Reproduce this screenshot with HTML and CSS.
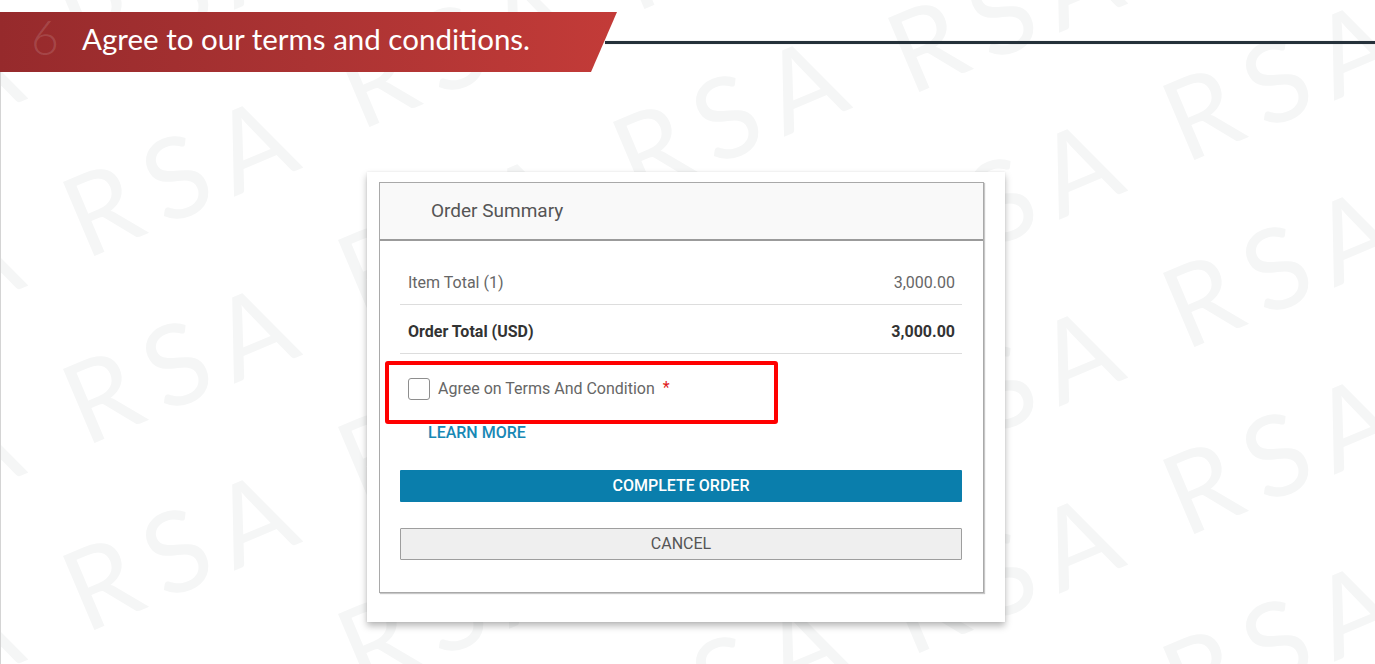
FILE: index.html
```html
<!DOCTYPE html>
<html lang="en">
<head>
<meta charset="utf-8">
<title>Agree to our terms and conditions</title>
<link rel="stylesheet" href="styles.css">
</head>
<body>
<div class="page">
  <div class="wm" aria-hidden="true">
    <div class="wm-col wm-c0"><div class="mark"><span>RSA</span></div><div class="mark"><span>RSA</span></div><div class="mark"><span>RSA</span></div><div class="mark"><span>RSA</span></div><div class="mark"><span>RSA</span></div></div>
    <div class="wm-col wm-c1"><div class="mark"><span>RSA</span></div><div class="mark"><span>RSA</span></div><div class="mark"><span>RSA</span></div><div class="mark"><span>RSA</span></div><div class="mark"><span>RSA</span></div></div>
    <div class="wm-col wm-c2"><div class="mark"><span>RSA</span></div><div class="mark"><span>RSA</span></div><div class="mark"><span>RSA</span></div><div class="mark"><span>RSA</span></div><div class="mark"><span>RSA</span></div></div>
    <div class="wm-col wm-c3"><div class="mark"><span>RSA</span></div><div class="mark"><span>RSA</span></div><div class="mark"><span>RSA</span></div><div class="mark"><span>RSA</span></div><div class="mark"><span>RSA</span></div></div>
    <div class="wm-col wm-c4"><div class="mark"><span>RSA</span></div><div class="mark"><span>RSA</span></div><div class="mark"><span>RSA</span></div><div class="mark"><span>RSA</span></div><div class="mark"><span>RSA</span></div></div>
    <div class="wm-col wm-c5"><div class="mark"><span>RSA</span></div><div class="mark"><span>RSA</span></div><div class="mark"><span>RSA</span></div><div class="mark"><span>RSA</span></div><div class="mark"><span>RSA</span></div></div>
  </div>

  <header class="step">
    <div class="step-banner">
      <span class="step-num">6</span>
      <h1 class="step-title">Agree to our terms and conditions.</h1>
    </div>
    <div class="step-line"></div>
  </header>

  <main class="main">
    <section class="card">
      <div class="summary">
        <div class="summary-head">Order Summary</div>
        <div class="summary-body">
          <div class="row"><span>Item Total (1)</span><span>3,000.00</span></div>
          <div class="row row-total"><span>Order Total (USD)</span><span>3,000.00</span></div>
          <div class="terms">
            <label class="agree">
              <span class="box"></span>
              <span class="agree-text">Agree on Terms And Condition</span>
              <span class="req">*</span>
            </label>
            <a class="learn">LEARN MORE</a>
            <div class="highlight"></div>
          </div>
          <button class="btn btn-primary">COMPLETE ORDER</button>
          <button class="btn btn-cancel">CANCEL</button>
        </div>
      </div>
    </section>
  </main>
</div>
</body>
</html>
```
FILE: styles.css
```css
* { box-sizing: border-box; }

html, body {
  margin: 0;
  padding: 0;
  background: #ffffff;
}

.page {
  position: relative;
  width: 1375px;
  height: 664px;
  overflow: hidden;
  padding-top: 12px;
  font-family: Roboto, "Liberation Sans", Arial, sans-serif;
}

/* watermark layer */
.wm {
  position: absolute;
  top: 0;
  left: -190px;
  right: 0;
  bottom: 0;
  display: flex;
  z-index: 0;
  pointer-events: none;
}
.wm-col {
  flex: none;
  width: 275px;
}
.wm-c0 { margin-top: -95px; }
.wm-c1 { margin-top: -26px; }
.wm-c2 { margin-top: 32px; }
.wm-c3 { margin-top: -86px; }
.wm-c4 { margin-top: -3px; }
.wm-c5 { margin-top: 65px; }

.mark {
  height: 187px;
}
.mark span {
  display: block;
  font-family: Lato, "DejaVu Sans", sans-serif;
  font-weight: 400;
  font-size: 112px;
  line-height: 1;
  letter-spacing: 16px;
  color: #f5f6f6;
  white-space: nowrap;
  transform-origin: 0 99px;
  transform: rotate(-23deg);
}

/* step header */
.step {
  position: relative;
  z-index: 1;
  display: flex;
  height: 60px;
}
.step-banner {
  flex: none;
  width: 617px;
  height: 60px;
  display: flex;
  align-items: center;
  padding-left: 31px;
  padding-bottom: 6px;
  background: linear-gradient(90deg, #962a2c 0%, #ab3333 50%, #c33b38 100%);
  clip-path: polygon(0 0, 100% 0, calc(100% - 26px) 100%, 0 100%);
}
.step-num {
  width: 51px;
  font-family: Lato, "DejaVu Sans", sans-serif;
  font-weight: 300;
  font-size: 48px;
  line-height: 1;
  color: rgba(255, 255, 255, 0.14);
  position: relative;
  top: -2px;
}
.step-title {
  margin: 0;
  font-family: Lato, "DejaVu Sans", sans-serif;
  font-weight: 400;
  font-size: 29.5px;
  line-height: 1;
  color: #ffffff;
  white-space: nowrap;
}
.step-line {
  flex: 1;
  align-self: center;
  height: 3px;
  margin-left: -12px;
  background: #25313a;
  box-shadow: 0 0 1px rgba(0, 0, 0, 0.35);
}

/* main area */
.main {
  position: relative;
  z-index: 1;
  height: 592px;
  border-left: 1px solid #d4d4d4;
  display: flex;
  justify-content: center;
  align-items: flex-start;
  padding-top: 100px;
  padding-right: 4px;
}

.card {
  width: 638px;
  background: #ffffff;
  padding: 10px 21px 29px 12px;
  box-shadow: 0 4px 7px rgba(0, 0, 0, 0.28), 0 0 2px rgba(0, 0, 0, 0.08);
}

.summary {
  border: 1px solid #a9a9a9;
  box-shadow: 1px 1px 1px rgba(0, 0, 0, 0.22);
  background: #ffffff;
}
.summary-head {
  height: 58px;
  padding-left: 51px;
  background: #f9f9f9;
  border-bottom: 2px solid #9b9b9b;
  font-size: 19px;
  line-height: 55px;
  color: #555555;
}
.summary-body {
  padding: 15px 21px 32px 20px;
}

.row {
  display: flex;
  justify-content: space-between;
  padding: 17px 7px 11px 8px;
  line-height: 20px;
  font-size: 16px;
  color: #666666;
  border-bottom: 1px solid #dddddd;
}
.row-total {
  font-weight: 700;
  color: #333333;
}

.terms {
  position: relative;
  padding-top: 24px;
}
.agree {
  display: flex;
  align-items: center;
  height: 22px;
  padding-left: 8px;
  font-size: 16px;
  color: #666666;
}
.box {
  width: 22px;
  height: 22px;
  border: 1px solid #8e8e8e;
  border-radius: 3px;
  background: #ffffff;
}
.agree-text {
  margin-left: 8px;
  line-height: 20px;
}
.req {
  margin-left: 8px;
  color: #e01b1b;
  position: relative;
  top: -2px;
}
.learn {
  display: block;
  margin-top: 23px;
  padding-left: 28px;
  font-size: 16px;
  font-weight: 500;
  line-height: 20px;
  color: #1888b5;
  text-decoration: none;
}
.highlight {
  position: absolute;
  left: -15px;
  top: 7px;
  width: 393px;
  height: 63px;
  border: 4px solid #ff0000;
  border-radius: 3px;
}

.btn {
  display: block;
  width: 100%;
  height: 32px;
  font-family: Roboto, "Liberation Sans", Arial, sans-serif;
  font-size: 16px;
  line-height: 30px;
  text-align: center;
  padding: 0;
  cursor: pointer;
}
.btn-primary {
  margin-top: 27px;
  background: #0a7eac;
  color: #ffffff;
  font-weight: 500;
  border: none;
  border-radius: 1px;
}
.btn-cancel {
  margin-top: 26px;
  background: #efefef;
  color: #555555;
  font-weight: 400;
  border: 1px solid #9e9e9e;
  border-radius: 1px;
}
```
